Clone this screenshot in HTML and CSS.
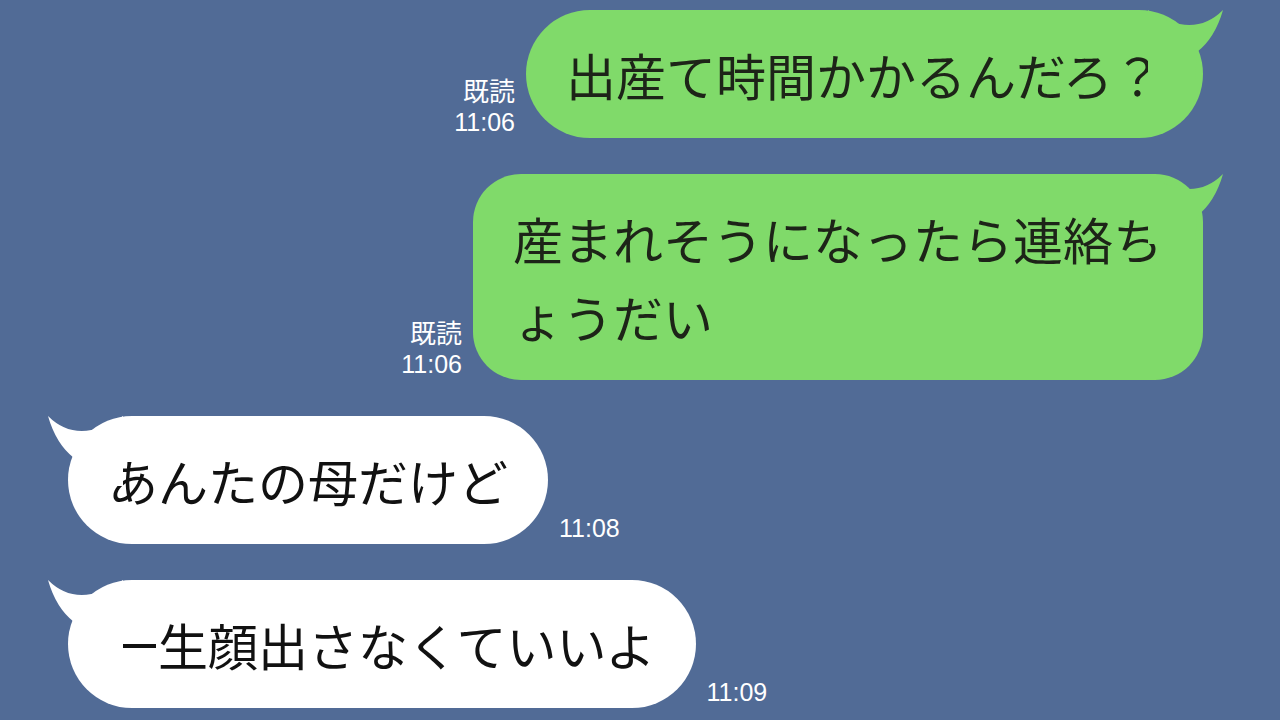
FILE: index.html
```html
<!DOCTYPE html>
<html lang="ja">
<head>
    <meta charset="UTF-8">
    <meta name="viewport" content="width=device-width, initial-scale=1.0">
    <title>トーク</title>
    <link rel="stylesheet" href="styles.css">
</head>
<body>

    <div class="chat">

        <!-- Sent -->
        <div class="row sent">
            <div class="meta"><span class="read">既読</span><span>11:06</span></div>
            <div class="bubble mine">
                出産て時間かかるんだろ？
                <svg class="tail" viewBox="0 0 85 70" width="85" height="70"><path d="M5 0 Q50 30 80 0 Q72 28 54 42 L52 70 L5 70 Z" fill="currentColor"/></svg>
            </div>
        </div>

        <div class="row sent">
            <div class="meta"><span class="read">既読</span><span>11:06</span></div>
            <div class="bubble mine multi">
                産まれそうになったら連絡ち<br>ょうだい
                <svg class="tail" viewBox="0 0 85 70" width="85" height="70"><path d="M5 0 Q50 30 80 0 Q72 28 54 42 L52 70 L5 70 Z" fill="currentColor"/></svg>
            </div>
        </div>

        <!-- Received -->
        <div class="row received">
            <div class="bubble theirs">
                あんたの母だけど
                <svg class="tail" viewBox="0 0 85 70" width="85" height="70"><path d="M5 0 Q50 30 80 0 Q72 28 54 42 L52 70 L5 70 Z" fill="currentColor"/></svg>
            </div>
            <div class="meta"><span>11:08</span></div>
        </div>

        <div class="row received">
            <div class="bubble theirs">
                一生顔出さなくていいよ
                <svg class="tail" viewBox="0 0 85 70" width="85" height="70"><path d="M5 0 Q50 30 80 0 Q72 28 54 42 L52 70 L5 70 Z" fill="currentColor"/></svg>
            </div>
            <div class="meta"><span>11:09</span></div>
        </div>

    </div>

</body>
</html>
```

FILE: styles.css
```css
/* General */
body {
    margin: 0;
    padding: 0;
    width: 1280px;
    height: 720px;
    overflow: hidden;
    background: #516b96;
    font-family: "Noto Sans CJK JP", "Noto Sans", sans-serif;
}

/* Chat column */
.chat {
    display: flex;
    flex-direction: column;
    gap: 36px;
    padding: 10px 77px 0 68px;
}

.row {
    display: flex;
    align-items: flex-end;
    gap: 11px;
}

.row.sent {
    justify-content: flex-end;
}

.row.received {
    justify-content: flex-start;
}

/* Read / time labels */
.meta {
    display: flex;
    flex-direction: column;
    align-items: flex-end;
    color: #fff;
    font-family: "Liberation Sans", "Noto Sans CJK JP", sans-serif;
    font-size: 25px;
    line-height: 30px;
    margin-bottom: 1px;
}

.meta .read {
    font-size: 26px;
}

/* Bubbles */
.bubble {
    position: relative;
    padding: 25px 40px;
    font-size: 50px;
    line-height: 78px;
    border-radius: 64px;
    white-space: nowrap;
}

.bubble.multi {
    border-radius: 48px;
}

.bubble.mine {
    background: #80da6a;
    color: #1d2418;
}

.bubble.theirs {
    background: #fff;
    color: #111;
}

/* Tail (the little horn at the top corner) */
.tail {
    position: absolute;
    top: 0;
    display: block;
}

.mine .tail {
    right: -25px;
    color: #80da6a;
}

.theirs .tail {
    left: -25px;
    color: #fff;
    transform: scaleX(-1);
}
```
